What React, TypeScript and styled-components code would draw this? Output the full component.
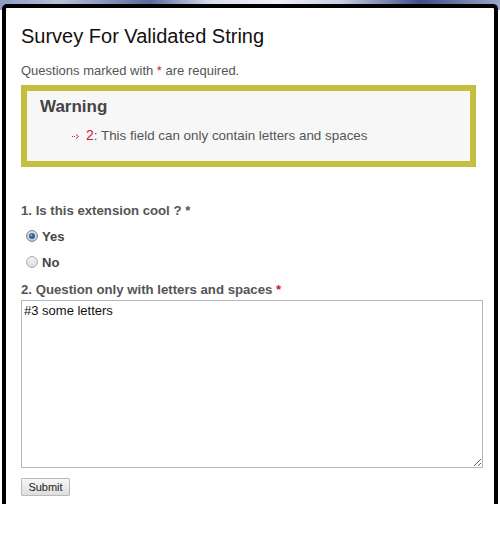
import React from "react";
import styled, { createGlobalStyle } from "styled-components";

const Global = createGlobalStyle`
  html, body { margin: 0; padding: 0; background: #fff; }
  body { font-family: "Liberation Sans", Arial, sans-serif; }
  * { box-sizing: border-box; }
`;

const Page = styled.div`
  width: 500px;
  height: 537px;
  padding-top: 4px;
  background:
    linear-gradient(
      to right,
      #8e9ac0 0%,
      #b7bfd8 12%,
      #5a6a9c 30%,
      #d8dcec 42%,
      #eef0f6 55%,
      #c9cfe3 68%,
      #3e4f86 84%,
      #6b7aa8 92%,
      #9aa6c8 100%
    ) top left / 100% 10px no-repeat,
    #fff;
`;

const Panel = styled.div`
  margin: 0 2px;
  width: 496px;
  height: 500px;
  background: #fff;
  border: 4px solid #000;
  border-bottom: none;
  border-radius: 5px 5px 0 0;
  padding: 15px 0 0 15px;
`;

const Title = styled.h1`
  margin: 0;
  font-size: 20px;
  line-height: 26px;
  font-weight: normal;
  color: #111;
`;

const Note = styled.p`
  margin: 14px 0 0;
  font-size: 13px;
  line-height: 16px;
  color: #555;
`;

const Star = styled.span<{ $red?: boolean }>`
  color: ${(p) => (p.$red ? "#c8202e" : "inherit")};
`;

const WarningBox = styled.div`
  margin-top: 6px;
  width: 455px;
  height: 82px;
  border: 6px solid #c2c03e;
  background: #f7f7f7;
  padding: 6px 0 0 13px;
`;

const WarningTitle = styled.h2`
  margin: 0;
  font-size: 17px;
  line-height: 20px;
  font-weight: bold;
  color: #444;
`;

const WarningList = styled.ul`
  margin: 9px 0 0;
  padding: 0 0 0 32px;
  list-style: none;
`;

const WarningItem = styled.li`
  display: flex;
  align-items: center;
  font-size: 13.4px;
  line-height: 18px;
  color: #555;
`;

const Arrow = styled.svg`
  width: 7px;
  height: 5px;
  margin: 1px 7px 0 0;
  flex: none;
`;

const RedNum = styled.span`
  color: #d0202e;
  font-size: 14px;
`;

const Form = styled.form`
  margin-top: 35px;
  display: flex;
  flex-direction: column;
  align-items: flex-start;
`;

const QuestionLabel = styled.div<{ $mt?: number }>`
  margin-top: ${(p) => p.$mt ?? 0}px;
  font-size: 13.2px;
  line-height: 18px;
  font-weight: bold;
  color: #555;
`;

const RadioList = styled.div`
  margin-top: 7px;
  display: flex;
  flex-direction: column;
  gap: 8px;
`;

const RadioRow = styled.label`
  display: flex;
  align-items: center;
  height: 18px;
  padding-left: 5px;
  font-size: 13px;
  font-weight: bold;
  color: #444;
  gap: 4px;
`;

const RadioIcon = styled.svg`
  width: 12px;
  height: 12px;
  flex: none;
`;

const TextArea = styled.textarea`
  margin-top: 1px;
  width: 462px;
  height: 168px;
  border: 1px solid #b4b8c0;
  padding: 2px 2px;
  font-family: "Liberation Sans", Arial, sans-serif;
  font-size: 13px;
  line-height: 16px;
  color: #111;
  resize: both;
  outline: none;
`;

const SubmitButton = styled.button`
  margin-top: 10px;
  width: 49px;
  height: 18px;
  padding: 0;
  border: 1px solid #b9b9b9;
  border-radius: 1px;
  background: linear-gradient(to bottom, #f7f7f7, #dedede);
  font-family: "Liberation Sans", Arial, sans-serif;
  font-size: 11px;
  line-height: 16px;
  color: #222;
`;

const Radio = ({ checked }: { checked?: boolean }) => (
  <RadioIcon viewBox="0 0 12 12">
    <defs>
      <linearGradient id={checked ? "rgOn" : "rgOff"} x1="0" y1="0" x2="0" y2="1">
        <stop offset="0" stopColor={checked ? "#e8e8e8" : "#f4f4f4"} />
        <stop offset="1" stopColor={checked ? "#c8c8c8" : "#dcdcdc"} />
      </linearGradient>
    </defs>
    <circle
      cx="6"
      cy="6"
      r="5.4"
      fill={`url(#${checked ? "rgOn" : "rgOff"})`}
      stroke={checked ? "#7d7d7d" : "#a9a9a9"}
      strokeWidth="1"
    />
    {checked && <circle cx="6" cy="6" r="3" fill="#2a64a8" />}
    {checked && <circle cx="5.3" cy="5.2" r="1" fill="#8fb6e4" />}
  </RadioIcon>
);

export default function App() {
  return (
    <>
      <Global />
      <Page>
        <Panel>
          <Title>Survey For Validated String</Title>
          <Note>
            Questions marked with <Star $red>*</Star> are required.
          </Note>
          <WarningBox>
            <WarningTitle>Warning</WarningTitle>
            <WarningList>
              <WarningItem>
                <Arrow viewBox="0 0 7 5">
                  <rect x="0" y="2" width="1" height="1" fill="#e0203a" />
                  <rect x="2" y="2" width="1" height="1" fill="#e0203a" />
                  <path d="M4 0.5 L6.5 2.5 L4 4.5" fill="none" stroke="#e0203a" strokeWidth="1" />
                </Arrow>
                <span>
                  <RedNum>2</RedNum>: This field can only contain letters and spaces
                </span>
              </WarningItem>
            </WarningList>
          </WarningBox>
          <Form onSubmit={(e) => e.preventDefault()}>
            <QuestionLabel>
              1. Is this extension cool ? <Star>*</Star>
            </QuestionLabel>
            <RadioList>
              <RadioRow>
                <Radio checked />
                Yes
              </RadioRow>
              <RadioRow>
                <Radio />
                No
              </RadioRow>
            </RadioList>
            <QuestionLabel $mt={10}>
              2. Question only with letters and spaces <Star $red>*</Star>
            </QuestionLabel>
            <TextArea defaultValue="#3 some letters" />
            <SubmitButton type="submit">Submit</SubmitButton>
          </Form>
        </Panel>
      </Page>
    </>
  );
}
